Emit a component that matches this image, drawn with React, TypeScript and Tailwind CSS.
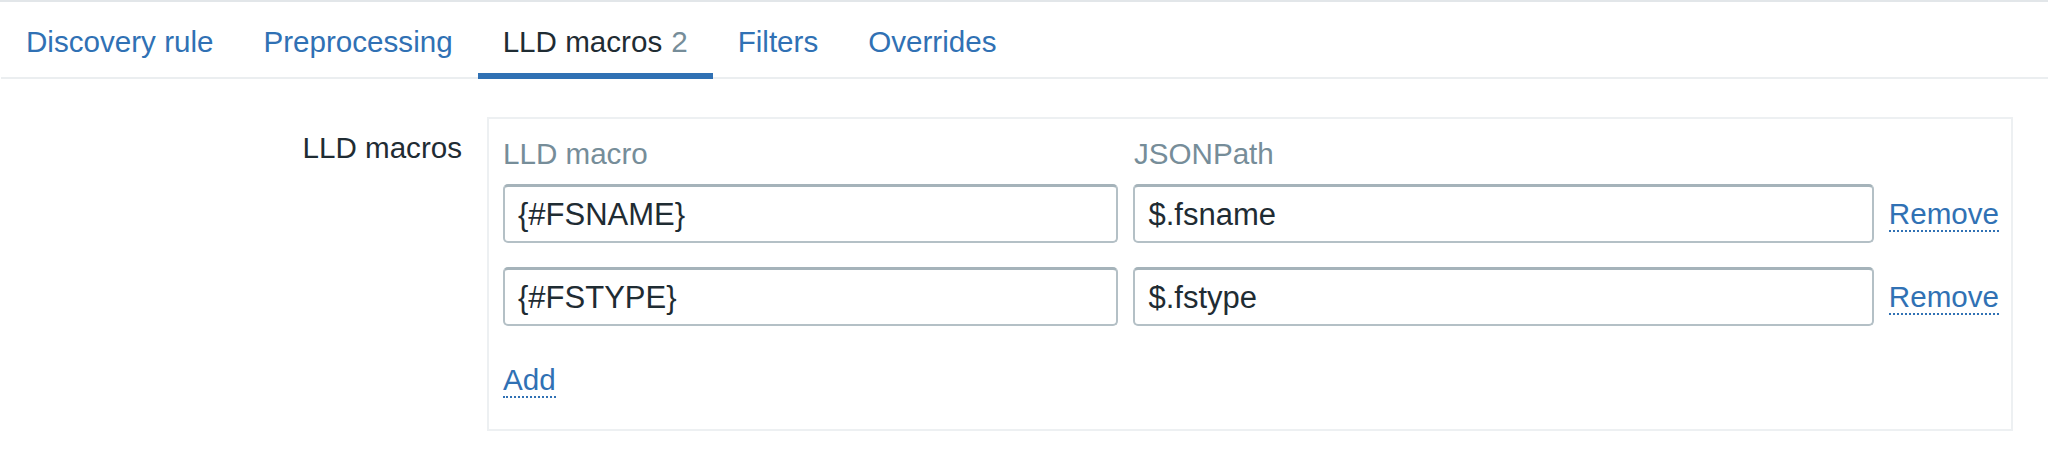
const tabs = [
  { label: "Discovery rule" },
  { label: "Preprocessing" },
  { label: "LLD macros", count: 2, active: true },
  { label: "Filters" },
  { label: "Overrides" },
]

const macros = [
  { macro: "{#FSNAME}", path: "$.fsname" },
  { macro: "{#FSTYPE}", path: "$.fstype" },
]

function LinkButton({ children }: { children: React.ReactNode }) {
  return (
    <span className="inline-block leading-[33px] text-[#3071b4] border-b-2 border-dotted border-[#3071b4] cursor-pointer">
      {children}
    </span>
  )
}

function TextBox({ value, width }: { value: string; width: string }) {
  return (
    <div
      className={`${width} h-[59px] flex items-center pt-[3px] px-[13px] bg-white border-2 border-t-[3px] border-[#b4c0c6] border-t-[#a5b3ba] rounded-[5px] text-[31px] text-[#1f2c33]`}
    >
      {value}
    </div>
  )
}

export default function App() {
  return (
    <div className="w-[2048px] h-[453px] bg-white font-['Liberation_Sans',Arial,sans-serif] text-[29.6px] text-[#1f2c33] overflow-hidden">
      <div className="h-[2px] bg-[#e2e6e9]" />

      {/* tab strip */}
      <nav className="flex ml-[1px] border-b-2 border-[#ebeef0]">
        {tabs.map((t) => (
          <div
            key={t.label}
            className={`-mb-[2px] px-[25px] pt-[22.5px] pb-[15px] leading-[33px] border-b-[6px] ${
              t.active ? "border-[#3071b4] text-[#1f2c33]" : "border-transparent text-[#3071b4]"
            }`}
          >
            {t.label}
            {t.count !== undefined && <span className="ml-[9px] text-[#768d99]">{t.count}</span>}
          </div>
        ))}
      </nav>

      {/* form */}
      <div className="flex mt-[38.5px]">
        <div className="w-[462px] pt-[13.5px] text-right leading-[33px]">LLD macros</div>
        <div className="ml-[25px] w-[1526px] h-[314px] border-2 border-[#edf0f2] pl-[14px] pr-[12px] pt-[17.5px]">
          <div className="flex gap-[15px] leading-[33px] text-[#768d99]">
            <div className="w-[616px]">LLD macro</div>
            <div className="w-[741px]">JSONPath</div>
          </div>
          <div className="mt-[14px] flex flex-col gap-[24px]">
            {macros.map((m) => (
              <div key={m.macro} className="flex items-center gap-[15px]">
                <TextBox value={m.macro} width="w-[616px]" />
                <TextBox value={m.path} width="w-[741px]" />
                <div className="pt-[2px]">
                  <LinkButton>Remove</LinkButton>
                </div>
              </div>
            ))}
          </div>
          <div className="mt-[32.5px]">
            <LinkButton>Add</LinkButton>
          </div>
        </div>
      </div>
    </div>
  )
}
